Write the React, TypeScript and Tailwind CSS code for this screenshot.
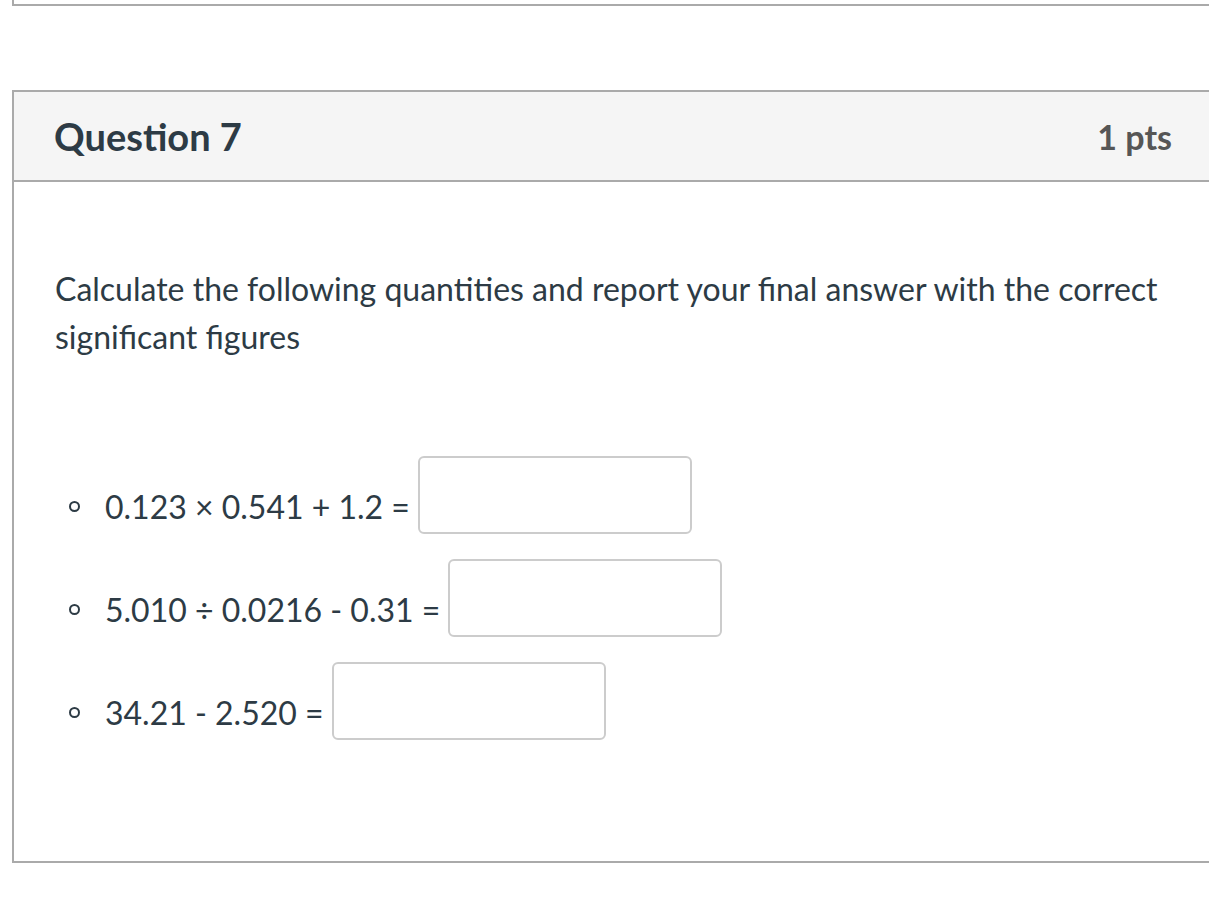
const items = [
  { expr: "0.123 × 0.541 + 1.2 =" },
  { expr: "5.010 ÷ 0.0216 - 0.31 =" },
  { expr: "34.21 - 2.520 =" },
]

export default function App() {
  return (
    <div className="h-[913px] w-[1209px] overflow-hidden bg-white font-['Lato','Open_Sans',sans-serif] text-[#2d3b45]">
      {/* bottom edge of the previous question */}
      <div className="ml-3 h-[6px] w-[1220px] border-b-2 border-l-2 border-[#aaaaaa]" />

      <div className="ml-3 mt-[84px] w-[1220px] border-2 border-r-0 border-[#aaaaaa]">
        <div className="flex h-[90px] items-center justify-between border-b-2 border-[#aaaaaa] bg-[#f5f5f5] pl-[40px] pr-[60px]">
          <h2 className="text-[38px] font-bold text-[#2d3b45]">Question 7</h2>
          <span className="text-[34px] font-bold text-[#565656]">1 pts</span>
        </div>

        <div className="h-[679px] pl-[41px] pt-[83px]">
          <p className="max-w-[1140px] text-[32px] leading-[48px]">
            Calculate the following quantities and report your final answer with the correct
            significant figures
          </p>

          <ul className="mt-[95px] flex flex-col gap-[25px]">
            {items.map((item) => (
              <li key={item.expr} className="flex items-center">
                <span className="ml-[14px] mr-[25px] mt-[23px] h-[11px] w-[11px] rounded-full border-2 border-[#2d3b45]" />
                <span className="mt-[23px] text-[32px] leading-none">{item.expr}</span>
                <input
                  type="text"
                  className="ml-[8px] h-[78px] w-[274px] rounded-[6px] border-2 border-[#cccccc] bg-white"
                />
              </li>
            ))}
          </ul>
        </div>
      </div>
    </div>
  )
}
